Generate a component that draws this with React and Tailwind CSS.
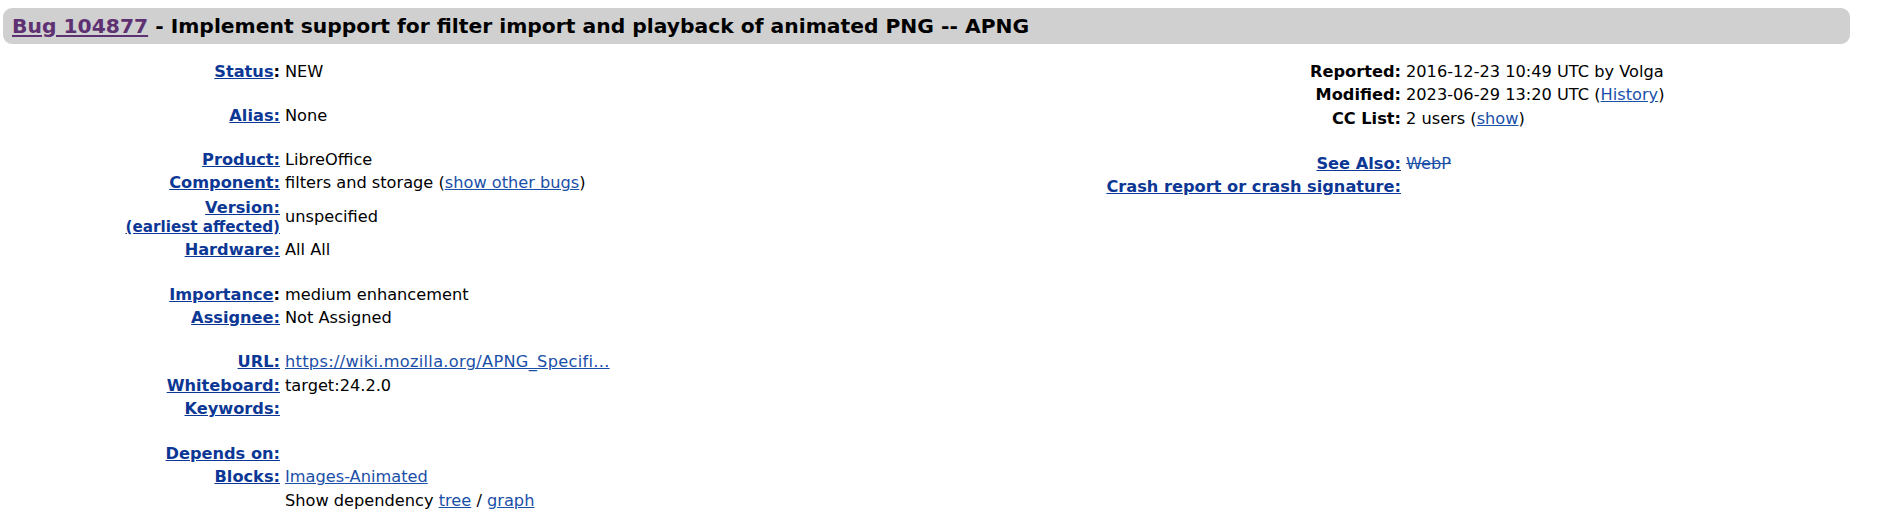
const labelLink = 'text-[#0c3795] underline'
const valueLink = 'text-[#1a4fa8] underline'

function Row({ label, children, h = 'h-[23.5px]', labelW = 'w-[280px]' }) {
  return (
    <div className={`flex items-center ${h}`}>
      <div className={`${labelW} shrink-0 text-right font-bold whitespace-nowrap`}>{label}</div>
      <div className="pl-[5px] whitespace-nowrap">{children}</div>
    </div>
  )
}

const Spacer = () => <div className="h-[20.7px]" />

function LeftTable() {
  return (
    <div className="flex flex-col">
      <Row label={<><a className={labelLink} href="#">Status</a>:</>}>NEW</Row>
      <Spacer />
      <Row label={<a className={labelLink} href="#">Alias:</a>}>None</Row>
      <Spacer />
      <Row label={<a className={labelLink} href="#">Product:</a>}>LibreOffice</Row>
      <Row label={<a className={labelLink} href="#">Component:</a>}>
        filters and storage (<a className={valueLink} href="#">show other bugs</a>)
      </Row>
      <Row
        h="h-[43.5px]"
        label={
          <div className="leading-[19px]">
            <a className={labelLink} href="#">Version:</a>
            <br />
            <a className={`${labelLink} text-[15.2px]`} href="#">(earliest affected)</a>
          </div>
        }
      >
        unspecified
      </Row>
      <Row label={<a className={labelLink} href="#">Hardware:</a>}>All All</Row>
      <Spacer />
      <Row label={<><a className={labelLink} href="#">Importance</a>:</>}>medium enhancement</Row>
      <Row label={<a className={labelLink} href="#">Assignee:</a>}>Not Assigned</Row>
      <Spacer />
      <Row label={<a className={labelLink} href="#">URL:</a>}>
        <a className={`${valueLink} tracking-[0.3px]`} href="#">https://wiki.mozilla.org/APNG_Specifi...</a>
      </Row>
      <Row label={<a className={labelLink} href="#">Whiteboard:</a>}>target:24.2.0</Row>
      <Row label={<a className={labelLink} href="#">Keywords:</a>}></Row>
      <Spacer />
      <Row label={<a className={labelLink} href="#">Depends on:</a>}></Row>
      <Row label={<a className={labelLink} href="#">Blocks:</a>}>
        <a className={valueLink} href="#">Images-Animated</a>
      </Row>
      <Row label="">
        Show dependency <a className={valueLink} href="#">tree</a> /{' '}
        <a className={valueLink} href="#">graph</a>
      </Row>
    </div>
  )
}

function RightTable() {
  const w = 'w-[1401px]'
  return (
    <div className="flex flex-col">
      <Row labelW={w} label="Reported:">2016-12-23 10:49 UTC by Volga</Row>
      <Row labelW={w} label="Modified:">
        2023-06-29 13:20 UTC (<a className={valueLink} href="#">History</a>)
      </Row>
      <Row labelW={w} label="CC List:">
        2 users (<a className={valueLink} href="#">show</a>)
      </Row>
      <div className="h-[21.5px]" />
      <Row labelW={w} label={<a className={labelLink} href="#">See Also:</a>}>
        <a className="text-[#1a4fa8] line-through" href="#">WebP</a>
      </Row>
      <Row labelW={w} label={<a className={labelLink} href="#">Crash report or crash signature:</a>}></Row>
    </div>
  )
}

export default function App() {
  return (
    <div className="w-[1887px] h-[516px] bg-white text-black overflow-hidden font-['DejaVu_Sans',sans-serif] text-[16.2px]">
      <div className="ml-[3px] mt-[8px] w-[1847px] h-[36px] bg-[#d0d0d0] rounded-[9px] flex items-center pl-[9px] font-bold text-[20.3px] whitespace-nowrap">
        <a className="text-[#5e3172] underline" href="#">Bug 104877</a>
        <span>&nbsp;- Implement support for filter import and playback of animated PNG -- APNG</span>
      </div>
      <div className="relative mt-[16px]">
        <LeftTable />
        <div className="absolute left-0 top-0">
          <RightTable />
        </div>
      </div>
    </div>
  )
}
